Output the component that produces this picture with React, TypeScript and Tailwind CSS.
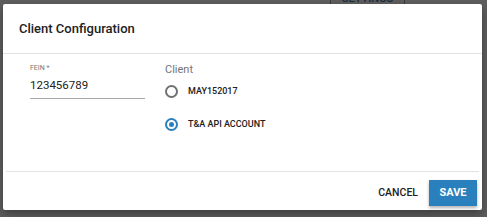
import React from "react";

export default function App() {
  return (
    <div className="relative w-[487px] h-[217px] overflow-hidden bg-[#5e5e5e] font-['Roboto',sans-serif]">
      <div className="absolute left-[330px] top-[-7px] h-[11px] w-[75px] border-x border-[#3a3a3a] text-center text-[11px] font-medium leading-[11px] text-[#1c2c3c]">
        SETTINGS
      </div>
      <div className="absolute left-[3px] top-[4px] flex h-[206px] w-[479px] flex-col rounded-[2px] bg-white shadow-[0_4px_10px_rgba(0,0,0,0.35)]">
        <div className="flex h-[50px] items-center border-b border-[#e2e2e2] pl-[16px]">
          <span className="text-[13px] font-medium text-[#212121]">Client Configuration</span>
        </div>
        <div className="flex flex-1 pl-[27px] pt-[9px]">
          <div className="flex w-[115px] flex-col">
            <span className="text-[7px] leading-[10px] text-[#757575]">FEIN *</span>
            <div className="border-b border-[#a8a8a8] pb-[6px] pt-[5px] text-[11.5px] leading-[14px] text-[#212121]">
              123456789
            </div>
          </div>
          <div className="ml-[20px] flex flex-col">
            <span className="text-[11px] leading-[13px] text-[#757575]">Client</span>
            <div className="mt-[9px] flex h-[13px] items-center">
              <span className="h-[13px] w-[13px] rounded-full border-[2px] border-[#707070]" />
              <span className="ml-[10px] text-[9px] font-medium text-[#212121]">MAY152017</span>
            </div>
            <div className="mt-[20px] flex h-[13px] items-center">
              <span className="flex h-[13px] w-[13px] items-center justify-center rounded-full border-[2px] border-[#2a80bd]">
                <span className="h-[5px] w-[5px] rounded-full bg-[#2a80bd]" />
              </span>
              <span className="ml-[10px] text-[9px] font-medium text-[#212121]">T&amp;A API ACCOUNT</span>
            </div>
          </div>
        </div>
        <div className="mx-[3px] flex h-[39px] items-start justify-end border-t border-[#e2e2e2] pr-[2px] pt-[8px]">
          <button className="mr-[9px] h-[26px] px-[2px] text-[10.5px] font-medium text-[#212121]">CANCEL</button>
          <button className="h-[26px] w-[48px] bg-[#2a80bd] text-[11px] font-bold text-white shadow-[0_2px_3px_rgba(0,0,0,0.3)]">
            SAVE
          </button>
        </div>
      </div>
    </div>
  );
}
